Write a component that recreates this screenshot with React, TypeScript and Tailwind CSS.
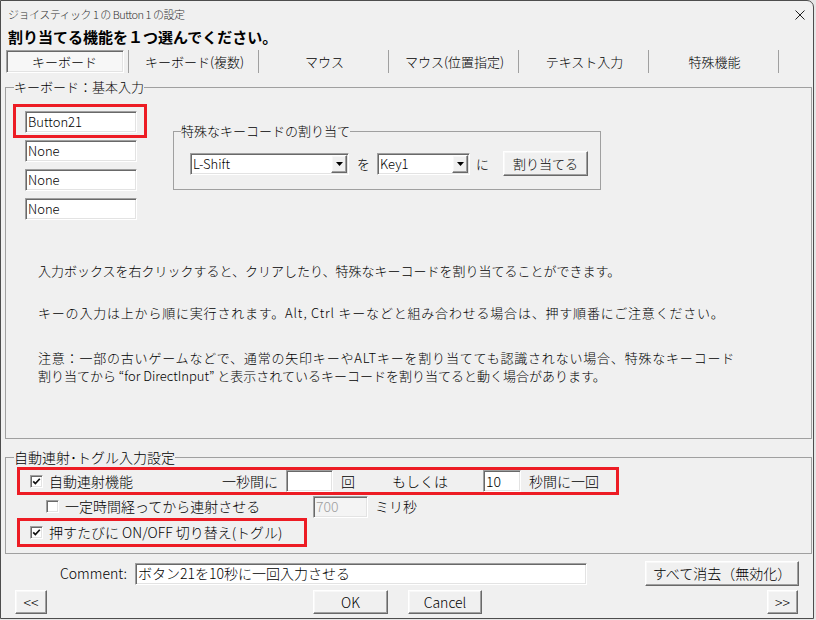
import type { ReactNode } from 'react';

const sunken =
  'bg-white border border-t-[#a0a0a0] border-l-[#a0a0a0] border-r-white border-b-white shadow-[inset_1px_1px_0_#696969,inset_-1px_-1px_0_#e3e3e3]';
const raised =
  'bg-[#f0f0f0] border border-t-white border-l-white border-r-[#696969] border-b-[#696969] shadow-[inset_-1px_-1px_0_#a0a0a0,inset_1px_1px_0_#f8f8f8]';

function Check({ on }: { on?: boolean }) {
  return (
    <span className={`${sunken} w-[13px] h-[13px] flex items-center justify-center shrink-0`}>
      {on && (
        <svg width="9" height="9" viewBox="0 0 9 9">
          <path d="M1.2 4.3 L3.4 6.6 L7.8 1.8" fill="none" stroke="#111" strokeWidth="1.7" />
        </svg>
      )}
    </span>
  );
}

function Field({ className, children }: { className: string; children?: ReactNode }) {
  return (
    <div className={`${sunken} ${className} h-[22px] flex items-center pl-[2px] shrink-0`}>{children}</div>
  );
}

function Select({ value, className }: { value: string; className: string }) {
  return (
    <div className={`${sunken} ${className} h-[22px] flex items-center shrink-0`}>
      <span className="flex-1 pl-[2px] text-[13px]">{value}</span>
      <span className={`${raised} w-[16px] h-[18px] mr-[1px] flex items-center justify-center`}>
        <svg width="7" height="4" viewBox="0 0 7 4">
          <path d="M0 0h7L3.5 4z" fill="#000" />
        </svg>
      </span>
    </div>
  );
}

function Btn({ className, children }: { className: string; children: ReactNode }) {
  return (
    <div className={`${raised} ${className} flex items-center justify-center shrink-0`}>{children}</div>
  );
}

const tabs = ['キーボード', 'キーボード(複数)', 'マウス', 'マウス(位置指定)', 'テキスト入力', '特殊機能'];

export default function App() {
  return (
    <div className="w-[816px] h-[620px] bg-[#e6e6e6] font-['Noto_Sans_CJK_JP',sans-serif] font-light text-black">
      <div className="w-[814px] h-[619px] border border-[#4d4d4d] rounded-tr-[7px] bg-[#f0f0f0] overflow-hidden">
        {/* title bar */}
        <div className="h-[27px] flex items-center pl-[7px] pr-[8px]">
          <span className="text-[11px] tracking-[-0.5px] text-[#333]">ジョイスティック 1 の Button 1 の設定</span>
          <svg className="ml-auto" width="10" height="10" viewBox="0 0 10 10">
            <path d="M0.5 0.5 L9.5 9.5 M9.5 0.5 L0.5 9.5" stroke="#1f1f1f" strokeWidth="1" />
          </svg>
        </div>

        <div className="h-[20px] leading-[18px] pl-[7px] text-[15px] font-bold">割り当てる機能を１つ選んでください。</div>

        {/* tabs */}
        <div className="flex h-[23px] mt-[2px] text-[13px]">
          {tabs.map((t, i) => (
            <div key={t} className="flex">
              <div className="w-[127px] flex items-center justify-center">
                {i === 0 ? (
                  <div className={`${sunken} !bg-[#f7f7f7] w-[118px] h-[23px] flex items-center justify-center`}>
                    {t}
                  </div>
                ) : (
                  <span>{t}</span>
                )}
              </div>
              <div className="w-[1px] bg-[#a0a0a0]" />
              <div className="w-[2px]" />
            </div>
          ))}
        </div>

        {/* keyboard basic input */}
        <fieldset className="ml-[4px] mt-[6px] w-[807px] h-[360px] border border-[#a0a0a0]">
          <legend className="ml-[8px] text-[13px] leading-[16px]">キーボード：基本入力</legend>
          <div className="flex pt-[16px] pl-[19px] text-[13px]">
            <div className="flex flex-col gap-[7px]">
              <div className="relative">
                <Field className="w-[112px]">Button21</Field>
                <span className="absolute -left-[12px] -top-[7px] w-[134px] h-[34px] border-[3px] border-[#ed1c24] pointer-events-none" />
              </div>
              <Field className="w-[112px]">None</Field>
              <Field className="w-[112px]">None</Field>
              <Field className="w-[112px]">None</Field>
            </div>
            <fieldset className="self-start ml-[36px] mt-[12px] w-[428px] border border-[#a0a0a0] pb-[13px]">
              <legend className="ml-[7px] leading-[16px]">特殊なキーコードの割り当て</legend>
              <div className="flex items-center pt-[12px] pl-[16px]">
                <Select value="L-Shift" className="w-[159px]" />
                <span className="ml-[8px]">を</span>
                <Select value="Key1" className="ml-[7px] w-[93px]" />
                <span className="ml-[6px]">に</span>
                <Btn className="ml-[14px] w-[85px] h-[25px]">割り当てる</Btn>
              </div>
            </fieldset>
          </div>
          <div className="pl-[32px] mt-[42px] text-[13px] leading-[17px]">
            <p>入力ボックスを右クリックすると、クリアしたり、特殊なキーコードを割り当てることができます。</p>
            <p className="mt-[25px] tracking-[0.8px]">
              キーの入力は上から順に実行されます。Alt, Ctrl キーなどと組み合わせる場合は、押す順番にご注意ください。
            </p>
            <p className="mt-[28px] leading-[18px]">
              <span className="tracking-[0.8px]">
                注意：一部の古いゲームなどで、通常の矢印キーやALTキーを割り当てても認識されない場合、特殊なキーコード
              </span>
              <br />
              割り当てから “for DirectInput” と表示されているキーコードを割り当てると動く場合があります。
            </p>
          </div>
        </fieldset>

        {/* auto fire / toggle */}
        <fieldset className="ml-[4px] mt-[9px] w-[807px] border border-[#a0a0a0] pb-[6px] text-[14px]">
          <legend className="ml-[8px] leading-[18px]">自動連射･トグル入力設定</legend>
          <div className="ml-[11px] mt-[1px] w-[602px] h-[28px] border-[3px] border-[#ed1c24] flex items-center pl-[10px]">
            <div className="w-[192px] flex items-center">
              <Check on />
              <span className="ml-[6px]">自動連射機能</span>
            </div>
            <span className="w-[64px]">一秒間に</span>
            <Field className="w-[47px]" />
            <span className="ml-[8px] w-[51px]">回</span>
            <span className="w-[91px]">もしくは</span>
            <Field className="w-[38px]">10</Field>
            <span className="ml-[8px]">秒間に一回</span>
          </div>
          <div className="h-[23px] flex items-center pl-[40px]">
            <div className="w-[267px] flex items-center">
              <Check />
              <span className="ml-[6px]">一定時間経ってから連射させる</span>
            </div>
            <Field className="w-[55px] !bg-[#f4f4f4] text-[#a0a0a0]">700</Field>
            <span className="ml-[7px]">ミリ秒</span>
          </div>
          <div className="ml-[11px] w-[290px] h-[29px] border-[3px] border-[#ed1c24] flex items-center pl-[10px]">
            <Check on />
            <span className="ml-[6px]">押すたびに ON/OFF 切り替え(トグル)</span>
          </div>
        </fieldset>

        {/* comment */}
        <div className="mt-[7px] h-[25px] flex items-center pl-[59px] text-[14px]">
          <span className="w-[75px]">Comment:</span>
          <Field className="w-[452px]">ボタン21を10秒に一回入力させる</Field>
          <Btn className="ml-[58px] w-[154px] h-[25px]">すべて消去（無効化）</Btn>
        </div>

        {/* bottom buttons */}
        <div className="mt-[4px] h-[24px] flex pl-[14px] text-[14px]">
          <Btn className="w-[32px] h-[24px]">&lt;&lt;</Btn>
          <Btn className="ml-[266px] w-[75px] h-[24px]">OK</Btn>
          <Btn className="ml-[20px] w-[74px] h-[24px]">Cancel</Btn>
          <Btn className="ml-[285px] w-[31px] h-[24px]">&gt;&gt;</Btn>
        </div>
      </div>
    </div>
  );
}
